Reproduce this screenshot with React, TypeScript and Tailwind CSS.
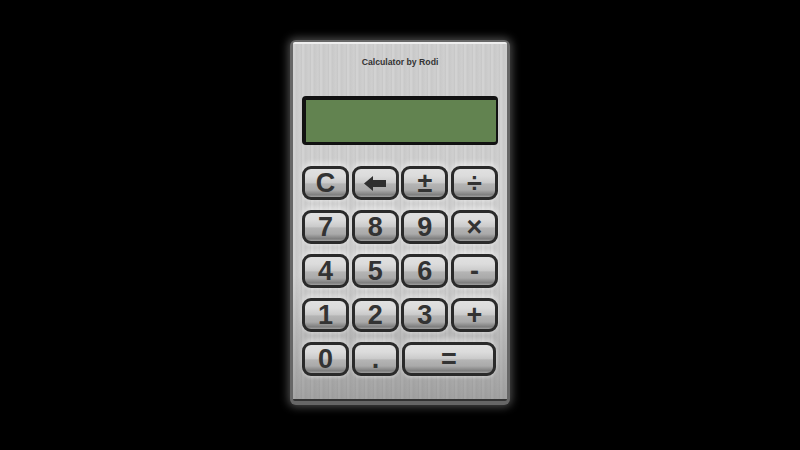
import React from 'react';

const rows = [
  ['C', 'arrow', '±', '÷'],
  ['7', '8', '9', '×'],
  ['4', '5', '6', '-'],
  ['1', '2', '3', '+'],
];

const Key: React.FC<{ label: string; wide?: boolean }> = ({ label, wide }) => (
  <div
    className={`${wide ? 'w-[94px]' : 'w-[47px]'} h-[34px] shrink-0 flex items-center justify-center rounded-[9px] border-[3px] border-[#2a2a2a] bg-[linear-gradient(180deg,#e0e0e0_0%,#dcdcdc_25%,#cbcbcb_48%,#b4b4b4_54%,#aaaaaa_75%,#7e7e7e_92%,#a0a0a0_100%)] shadow-[0_-4px_5px_rgba(255,255,255,0.4),0_2px_3px_rgba(255,255,255,0.3)] text-[#333] text-[27px] leading-none font-bold font-['Liberation_Sans',sans-serif]`}
  >
    {label === 'arrow' ? (
      <svg width="22" height="15" viewBox="0 0 22 15">
        <path d="M0 7.5 L9 0 V4 H22 V11 H9 V15 Z" fill="#2f2f2f" />
      </svg>
    ) : (
      label
    )}
  </div>
);

export default function App() {
  return (
    <div className="w-[800px] h-[450px] bg-black flex justify-center pt-[40px] overflow-hidden">
      <div className="w-[220px] h-[365px] rounded-[6px] bg-[#666666] shadow-[0_0_8px_2px_rgba(100,100,100,0.75)] px-[3px] pt-[2px]">
        <div className="h-[359px] flex flex-col items-center rounded-[2px] border-b-2 border-b-[#333] border-t-2 border-t-[#eeeeee] bg-[linear-gradient(180deg,rgba(0,0,0,0)_0%,rgba(0,0,0,0)_65%,rgba(0,0,0,0.22)_100%),repeating-linear-gradient(90deg,#d2d2d2_0px,#d2d2d2_2px,#c8c8c8_3px,#cfcfcf_7px,#c6c6c6_9px)]">
          <div className="mt-[11px] h-[14px] leading-[14px] text-[8.7px] font-bold text-[#333] font-['Liberation_Sans',sans-serif]">
            Calculator by Rodi
          </div>
          <div className="mt-[27px] w-[196px] h-[49px] rounded-[4px] border-[#111] border-t-[4px] border-l-[4px] border-r-[2px] border-b-[3px] bg-[#628350]" />
          <div className="mt-[21px] w-[196px] flex flex-col gap-[10px]">
            {rows.map((row, i) => (
              <div key={i} className="flex justify-between">
                {row.map((k) => (
                  <Key key={k} label={k} />
                ))}
              </div>
            ))}
            <div className="flex gap-[3px]">
              <Key label="0" />
              <Key label="." />
              <Key label="=" wide />
            </div>
          </div>
        </div>
      </div>
    </div>
  );
}
